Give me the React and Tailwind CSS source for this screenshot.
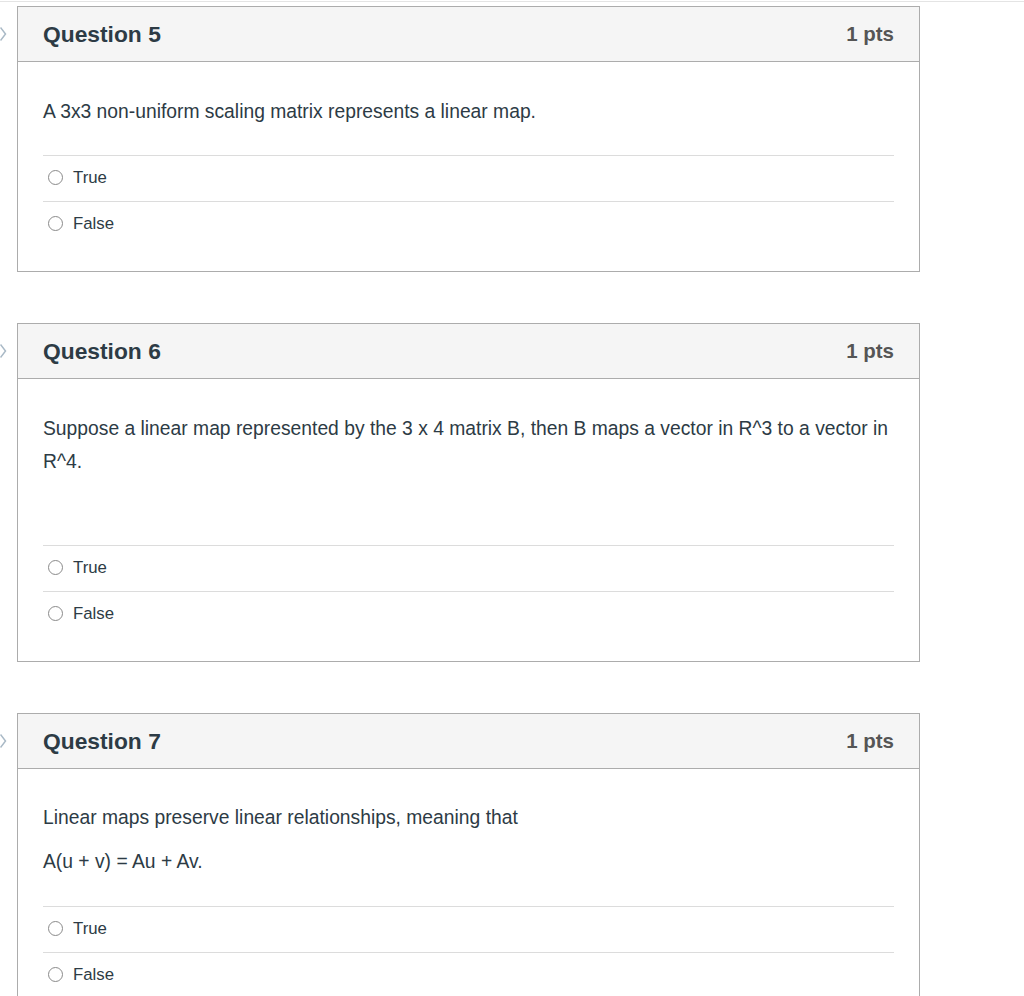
import React from "react";

const font = { fontFamily: '"Liberation Sans", Arial, Helvetica, sans-serif' };

function Chevron() {
  return (
    <svg width="8" height="16" viewBox="0 0 8 16" className="absolute left-0 top-[20px]">
      <path d="M0.5 1.5 L5.5 8 L0.5 14.5" fill="none" stroke="#a9b9c6" strokeWidth="1.5" />
    </svg>
  );
}

function Answer({ label }) {
  return (
    <div className="flex h-[46px] items-center border-t border-[#dcdcdc] pb-[2px] pl-[5px]">
      <span className="box-border h-[15px] w-[15px] rounded-full border border-[#8a8a8a] bg-white" />
      <span className="ml-[10px] text-[16.8px] text-[#2d3b45]">{label}</span>
    </div>
  );
}

function Question({ num, children, gapAfter, padTop = 33 }) {
  return (
    <div className="relative pl-[17px]">
      <Chevron />
      <div className="w-[903px] border border-[#acacac] bg-white">
        <div className="flex h-[55px] items-center justify-between border-b border-[#acacac] bg-[#f5f5f5] px-[25px]">
          <span className="text-[22.8px] font-bold text-[#2d3b45]">Question {num}</span>
          <span className="text-[20.5px] font-bold text-[#555555]">1 pts</span>
        </div>
        <div className="px-[25px] pb-[24px]" style={{ paddingTop: padTop }}>
          <div className="text-[19.3px] leading-[33px] text-[#2d3b45]">{children}</div>
          <div style={{ height: gapAfter }} />
          <Answer label="True" />
          <Answer label="False" />
        </div>
      </div>
    </div>
  );
}

export default function App() {
  return (
    <div className="min-h-[996px] w-[1024px] overflow-hidden bg-white" style={font}>
      <div className="h-[2px] border-b border-[#e4e4e4]" />
      <div className="flex flex-col gap-[51px] pt-[4px]">
        <Question num={5} gapAfter={27}>
          <p>A 3x3 non-uniform scaling matrix represents a linear map.</p>
        </Question>
        <Question num={6} gapAfter={67}>
          <p>
            Suppose a linear map represented by the 3 x 4 matrix B, then B maps a vector in R^3 to a vector in R^4.
          </p>
        </Question>
        <Question num={7} gapAfter={28} padTop={32}>
          <p>Linear maps preserve linear relationships, meaning that</p>
          <p className="mt-[11px]">A(u + v) = Au + Av.</p>
        </Question>
      </div>
    </div>
  );
}
